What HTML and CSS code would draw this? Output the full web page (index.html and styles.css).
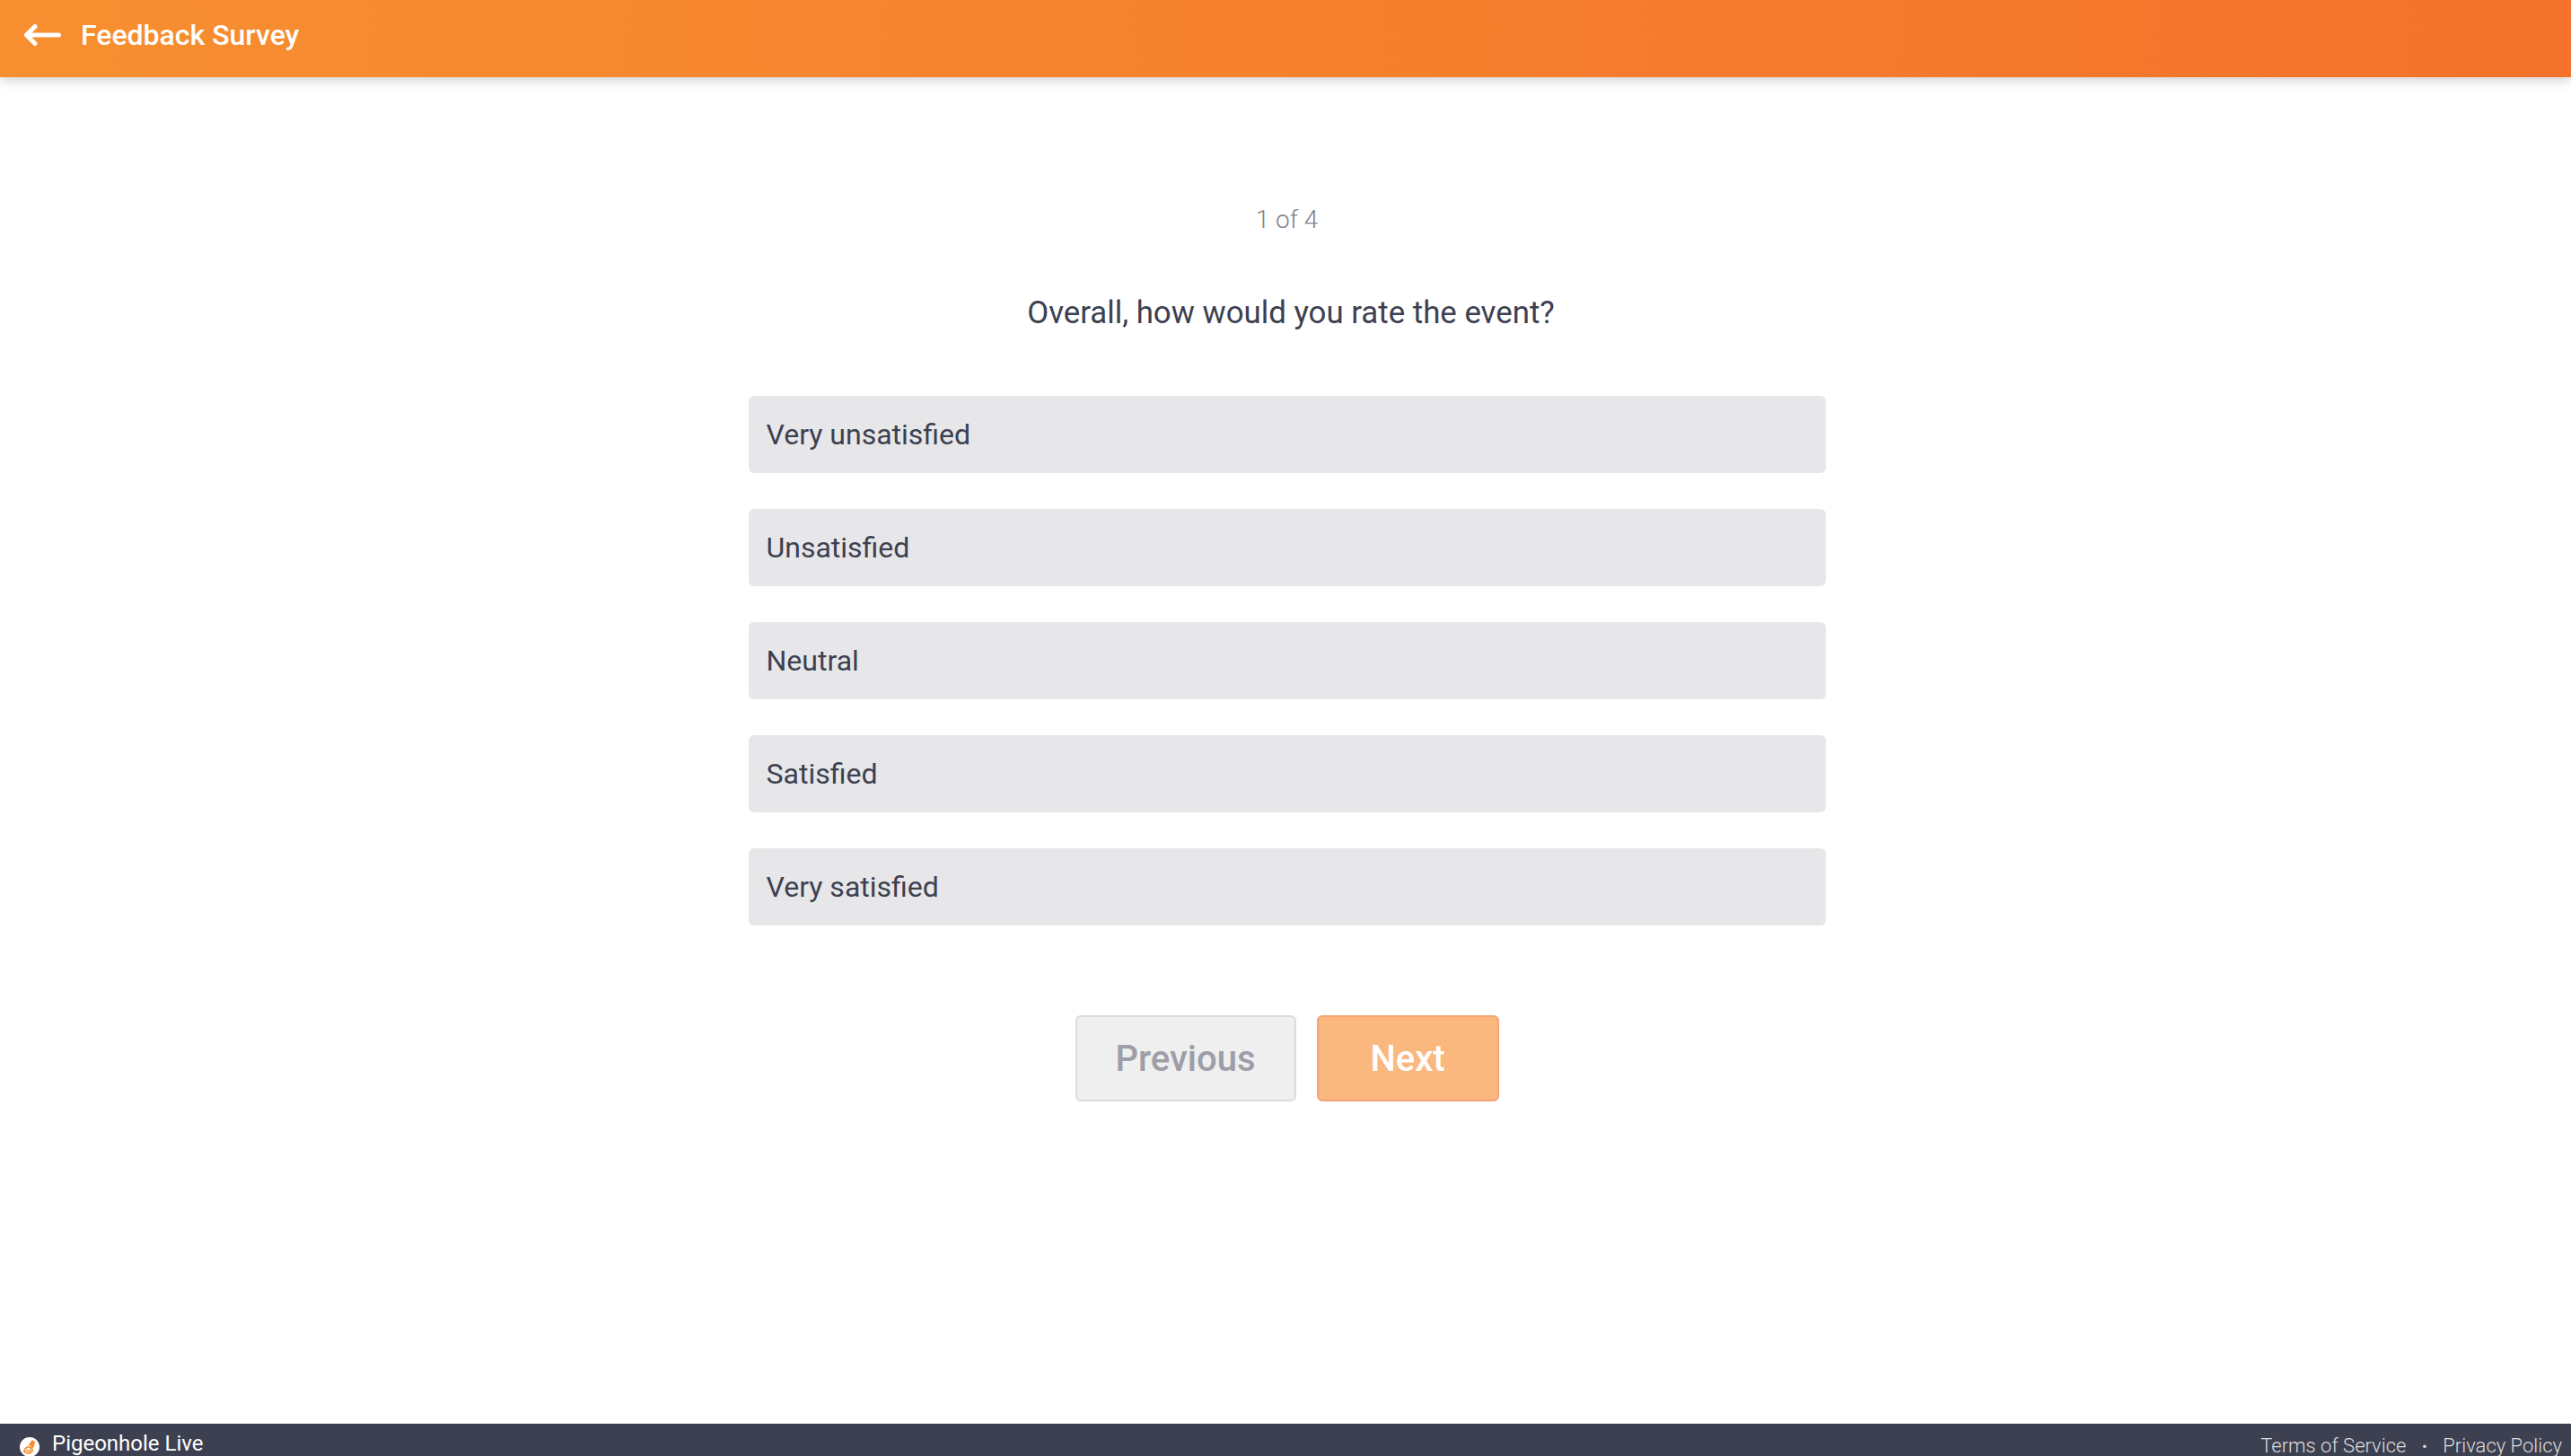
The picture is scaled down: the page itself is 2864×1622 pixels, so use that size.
FILE: index.html
```html
<!DOCTYPE html>
<html lang="en">
<head>
  <meta charset="UTF-8">
  <title>Feedback Survey</title>
  <link rel="stylesheet" href="styles.css">
</head>
<body>

<header class="topbar">
  <svg class="back-icon" viewBox="0 0 42 26" width="42" height="26">
    <path d="M39.500 13H3.500M13 3.500 3.500 13l9.500 9.500" fill="none" stroke="#fff" stroke-width="5" stroke-linecap="round" stroke-linejoin="round"/>
  </svg>
  <h1>Feedback Survey</h1>
</header>

<main class="survey">
  <div class="progress">1 of 4</div>
  <h2 class="question">Overall, how would you rate the event?</h2>

  <div class="options">
    <div class="option">Very unsatisfied</div>
    <div class="option">Unsatisfied</div>
    <div class="option">Neutral</div>
    <div class="option">Satisfied</div>
    <div class="option">Very satisfied</div>
  </div>

  <div class="actions">
    <button class="btn btn-prev">Previous</button>
    <button class="btn btn-next">Next</button>
  </div>
</main>

<footer class="footer">
  <div class="brand">
    <svg class="brand-logo" viewBox="0 0 22 22" width="22" height="22">
      <circle cx="11" cy="11" r="11" fill="#fff"/>
      <path d="M12.500 4.500c1-1.200 2.800-1.200 3.700 0l2 .8-1.700.8c.3 2.800-.7 5.400-2.800 7.200-.6-2.400-2-4-4.400-4.700 1.500-1.100 2.300-2.500 3.200-4.100z" fill="#f78f2e"/>
      <path d="M9 10.800c-2.300 1-4 2.800-4.300 5.500 1.500 1.700 5.500 2.500 8.300.5 1-1 1.400-1.800 1.300-2.400-.7-1.800-2.500-3.200-5.300-3.600z" fill="none" stroke="#f78f2e" stroke-width="1.500"/>
      <path d="M7.500 12.500l2.500 5.500M11 12.500l.5 5M4.800 15.500l8.500-.5" stroke="#f78f2e" stroke-width="1"/>
    </svg>
    <span>Pigeonhole Live</span>
  </div>
  <div class="links">
    <a>Terms of Service</a>
    <span class="dot">•</span>
    <a>Privacy Policy</a>
  </div>
</footer>

</body>
</html>
```

FILE: styles.css
```css
* {
  box-sizing: border-box;
}
html, body {
  height: 100%;
}
body {
  margin: 0;
  display: flex;
  flex-direction: column;
  font-family: Roboto, "Liberation Sans", sans-serif;
  color: #3c4050;
  background-color: #fff;
  overflow: hidden;
}

/* Top bar */
.topbar {
  height: 86px;
  flex-shrink: 0;
  display: flex;
  align-items: center;
  padding: 0 0 9px 26px;
  background: linear-gradient(90deg, #f78f30, #f4722b);
  box-shadow: 0 3px 12px rgba(0, 0, 0, 0.2);
}
.back-icon {
  margin-right: 22px;
}
.topbar h1 {
  margin: 0;
  font-size: 32px;
  font-weight: 500;
  color: #fff;
}

/* Survey */
.survey {
  flex-grow: 1;
  display: flex;
  flex-direction: column;
  align-items: center;
  padding: 141px 0 0 3px;
}
.progress {
  font-size: 28px;
  line-height: 36px;
  font-weight: 300;
  color: #7f818c;
}
.question {
  margin: 65px 0 0;
  padding-left: 9px;
  font-size: 34.8px;
  line-height: 40px;
  font-weight: 400;
}
.options {
  width: 1200px;
  margin-top: 73px;
  display: flex;
  flex-direction: column;
  gap: 40px;
}
.option {
  height: 86px;
  display: flex;
  align-items: center;
  padding-left: 20px;
  font-size: 32px;
  background-color: #e7e7e9;
  border-radius: 6px;
}
.actions {
  margin-top: 100px;
  display: flex;
  gap: 23px;
}
.btn {
  height: 96px;
  font-family: inherit;
  font-size: 40px;
  font-weight: 500;
  border-radius: 6px;
  border: 2px solid;
}
.btn-prev {
  width: 246px;
  color: #9d9ea7;
  background-color: #efefef;
  border-color: #dbdbdb;
}
.btn-next {
  width: 203px;
  color: #fff;
  background-color: #fab77e;
  border-color: #f8a377;
}

/* Footer */
.footer {
  height: 36px;
  flex-shrink: 0;
  display: flex;
  justify-content: space-between;
  align-items: flex-start;
  padding: 0 10px 0 22px;
  background-color: #3c4050;
}
.brand {
  display: flex;
  align-items: center;
  padding-top: 6px;
  font-size: 24px;
  line-height: 30px;
  color: #fff;
}
.brand-logo {
  margin: 9px 14px 0 0;
}
.links {
  font-size: 22px;
  font-weight: 300;
  line-height: 30px;
  padding-top: 10px;
  color: #dcdcde;
}
.dot {
  margin: 0 12px;
  font-size: 19px;
}
```
